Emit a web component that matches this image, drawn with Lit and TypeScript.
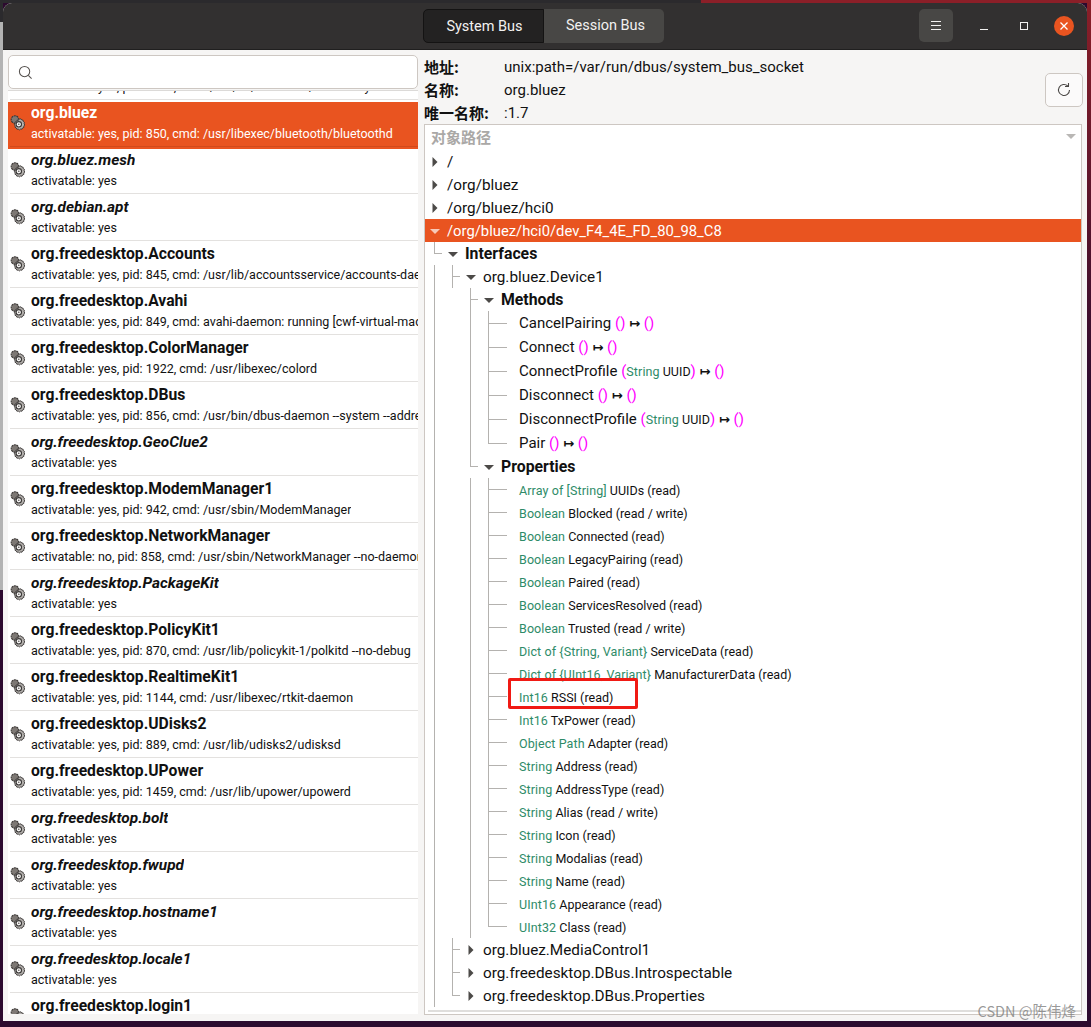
import { LitElement, html, css, svg } from 'lit';
import { customElement } from 'lit/decorators.js';

interface Service {
  name: string;
  info: string;
  idle?: boolean;
  selected?: boolean;
}

const yes = 'activatable: yes';

const services: Service[] = [
  { name: 'org.bluez.obex', info: `${yes}, pid: 1041, cmd: /usr/lib/bluetooth/obexd --system` },
  { name: 'org.bluez', info: `${yes}, pid: 850, cmd: /usr/libexec/bluetooth/bluetoothd`, selected: true },
  { name: 'org.bluez.mesh', info: yes, idle: true },
  { name: 'org.debian.apt', info: yes, idle: true },
  { name: 'org.freedesktop.Accounts', info: `${yes}, pid: 845, cmd: /usr/lib/accountsservice/accounts-daemon` },
  { name: 'org.freedesktop.Avahi', info: `${yes}, pid: 849, cmd: avahi-daemon: running [cwf-virtual-machine.local]` },
  { name: 'org.freedesktop.ColorManager', info: `${yes}, pid: 1922, cmd: /usr/libexec/colord` },
  { name: 'org.freedesktop.DBus', info: `${yes}, pid: 856, cmd: /usr/bin/dbus-daemon --system --address=systemd:` },
  { name: 'org.freedesktop.GeoClue2', info: yes, idle: true },
  { name: 'org.freedesktop.ModemManager1', info: `${yes}, pid: 942, cmd: /usr/sbin/ModemManager` },
  { name: 'org.freedesktop.NetworkManager', info: 'activatable: no, pid: 858, cmd: /usr/sbin/NetworkManager --no-daemon' },
  { name: 'org.freedesktop.PackageKit', info: yes, idle: true },
  { name: 'org.freedesktop.PolicyKit1', info: `${yes}, pid: 870, cmd: /usr/lib/policykit-1/polkitd --no-debug` },
  { name: 'org.freedesktop.RealtimeKit1', info: `${yes}, pid: 1144, cmd: /usr/libexec/rtkit-daemon` },
  { name: 'org.freedesktop.UDisks2', info: `${yes}, pid: 889, cmd: /usr/lib/udisks2/udisksd` },
  { name: 'org.freedesktop.UPower', info: `${yes}, pid: 1459, cmd: /usr/lib/upower/upowerd` },
  { name: 'org.freedesktop.bolt', info: yes, idle: true },
  { name: 'org.freedesktop.fwupd', info: yes, idle: true },
  { name: 'org.freedesktop.hostname1', info: yes, idle: true },
  { name: 'org.freedesktop.locale1', info: yes, idle: true },
  { name: 'org.freedesktop.login1', info: yes },
];

type Kind = 'plain' | 'bold' | 'method' | 'prop';

interface Node {
  label: unknown;
  kind?: Kind;
  open?: boolean;
  leaf?: boolean;
  selected?: boolean;
  marked?: boolean;
  children?: Node[];
}

const ty = (t: string) => html`<span class="type">${t}</span>`;
const par = (t: string) => html`<span class="par">${t}</span>`;
const method = (name: string, arg?: string): Node => ({
  kind: 'method',
  leaf: true,
  label: html`${name} ${par('(')}${arg ? html`<small>${ty('String')} ${arg}</small>` : ''}${par(')')} <b class="arrow">↦</b> ${par('()')}`,
});
const prop = (type: string, rest: string, marked = false): Node => ({
  kind: 'prop',
  leaf: true,
  marked,
  label: html`${ty(type)} ${rest}`,
});

const tree: Node[] = [
  { label: '/' },
  { label: '/org/bluez' },
  { label: '/org/bluez/hci0' },
  {
    label: '/org/bluez/hci0/dev_F4_4E_FD_80_98_C8',
    open: true,
    selected: true,
    children: [
      {
        label: 'Interfaces',
        kind: 'bold',
        open: true,
        children: [
          {
            label: 'org.bluez.Device1',
            open: true,
            children: [
              {
                label: 'Methods',
                kind: 'bold',
                open: true,
                children: [
                  method('CancelPairing'),
                  method('Connect'),
                  method('ConnectProfile', 'UUID'),
                  method('Disconnect'),
                  method('DisconnectProfile', 'UUID'),
                  method('Pair'),
                ],
              },
              {
                label: 'Properties',
                kind: 'bold',
                open: true,
                children: [
                  prop('Array of [String]', 'UUIDs (read)'),
                  prop('Boolean', 'Blocked (read / write)'),
                  prop('Boolean', 'Connected (read)'),
                  prop('Boolean', 'LegacyPairing (read)'),
                  prop('Boolean', 'Paired (read)'),
                  prop('Boolean', 'ServicesResolved (read)'),
                  prop('Boolean', 'Trusted (read / write)'),
                  prop('Dict of {String, Variant}', 'ServiceData (read)'),
                  prop('Dict of {UInt16, Variant}', 'ManufacturerData (read)'),
                  prop('Int16', 'RSSI (read)', true),
                  prop('Int16', 'TxPower (read)'),
                  prop('Object Path', 'Adapter (read)'),
                  prop('String', 'Address (read)'),
                  prop('String', 'AddressType (read)'),
                  prop('String', 'Alias (read / write)'),
                  prop('String', 'Icon (read)'),
                  prop('String', 'Modalias (read)'),
                  prop('String', 'Name (read)'),
                  prop('UInt16', 'Appearance (read)'),
                  prop('UInt32', 'Class (read)'),
                ],
              },
            ],
          },
          { label: 'org.bluez.MediaControl1' },
          { label: 'org.freedesktop.DBus.Introspectable' },
          { label: 'org.freedesktop.DBus.Properties' },
        ],
      },
    ],
  },
];

// two meshed gears, the small one behind at the top left
const gear = svg`
  <circle cx="5" cy="4.600" r="3.800" fill="#7d7874" stroke="#3a3735" stroke-width="1.100" stroke-dasharray="2 .7"/>
  <path d="M8.300 3.600l1.300.6 1.300-.4.800 1.200 1.400.2.200 1.400 1.200.8-.4 1.400.7 1.200-1 1 .1 1.400-1.300.5-.6 1.300-1.400-.2-1.100.9-1.200-.8-1.400.1-.6-1.300-1.300-.6.200-1.400-.9-1.100.8-1.200-.1-1.400 1.300-.6.6-1.300 1.400.1z" fill="#b3b0ad" stroke="#3a3735" stroke-width=".9"/>
  <circle cx="8.800" cy="9.300" r="2.700" fill="#f6f5f4" stroke="#3a3837" stroke-width="1.100"/>
  <circle cx="8.800" cy="9.300" r=".8" fill="#55514f"/>`;

@customElement('app-root')
export class AppRoot extends LitElement {
  static styles = css`
    :host {
      display: block;
      height: 1027px;
      box-sizing: border-box;
      padding: 3px 4px 6px 3px;
      overflow: hidden;
      position: relative;
      background:
        linear-gradient(90deg, #2b2a2d 0, #2b2a2d 64.2%, #8b1f28 64.3%, #8b1f28 100%) top / 100% 3px no-repeat,
        linear-gradient(#2b2a2d 0, #2b2a2d 22px, #b3b3b3 22px, #b3b3b3 590px, #2c0a2e 590px) left / 3px 100% no-repeat,
        linear-gradient(#8b1f28 0, #2c0a2e 400px) right / 4px 100% no-repeat,
        #2c0a2e;
      font-family: Roboto, 'Noto Sans', sans-serif;
      color: #111;
    }

    .window {
      height: 100%;
      display: flex;
      flex-direction: column;
      border-radius: 9px 9px 0 0;
      overflow: hidden;
      background: #f6f5f4;
    }

    /* header bar */
    header {
      flex: none;
      height: 47px;
      box-sizing: border-box;
      padding: 6px 3px 7px 420px;
      display: flex;
      align-items: center;
      background: #323030;
      border-bottom: 1px solid #201f1f;
    }

    .switcher {
      display: flex;
      height: 34px;
    }

    .switcher button {
      all: unset;
      width: 120px;
      height: 34px;
      box-sizing: border-box;
      padding-left: 3px;
      text-align: center;
      font-size: 14.5px;
      line-height: 34px;
      color: #f2f1f0;
      background: #484745;
      border-radius: 0 5px 5px 0;
    }

    .switcher button.on {
      width: 121px;
      padding-left: 2px;
      line-height: 33px;
      background: #232222;
      border: 1px solid #141313;
      border-radius: 5px 0 0 5px;
    }

    .menu {
      margin-left: auto;
      width: 34px;
      height: 33px;
      border-radius: 5px;
      background: #484745;
      display: flex;
      align-items: center;
      justify-content: center;
    }

    .wm {
      width: 40px;
      height: 33px;
      display: flex;
      align-items: center;
      justify-content: center;
    }

    .wm.first {
      margin-left: 11px;
    }

    .close {
      width: 20px;
      height: 20px;
      border-radius: 50%;
      background: #e95420;
      display: flex;
      align-items: center;
      justify-content: center;
    }

    /* body */
    .body {
      flex: 1;
      min-height: 0;
      display: flex;
    }

    .left {
      flex: none;
      width: 415px;
      box-sizing: border-box;
      padding: 5px 0 7px 5px;
      display: flex;
      flex-direction: column;
    }

    .search {
      flex: none;
      height: 34px;
      box-sizing: border-box;
      border: 1px solid #cdc7c2;
      border-radius: 5px;
      background: #fff;
      display: flex;
      align-items: center;
      padding-left: 9px;
    }

    .list {
      flex: 1;
      min-height: 0;
      margin-top: 1px;
      overflow: hidden;
      background: #fff;
      border-top: 1px solid #dcdad8;
    }

    .list-inner {
      margin-top: -36px;
    }

    .svc {
      height: 47px;
      box-sizing: border-box;
      padding: 0 0 0 2px;
    }

    .svc-in {
      height: 45px;
      box-sizing: border-box;
      border-bottom: 1px solid #e3e1df;
      display: flex;
      align-items: center;
      gap: 5px;
    }

    .svc svg {
      flex: none;
      width: 16px;
      height: 16px;
      margin-bottom: 3px;
    }

    .svc-txt {
      min-width: 0;
      white-space: nowrap;
      overflow: hidden;
    }

    .svc-name {
      font-size: 15.7px;
      font-weight: 700;
      line-height: 18px;
      height: 20px;
    }

    .svc-name.idle {
      font-style: italic;
      font-size: 15.4px;
    }

    .svc-info {
      font-size: 12.5px;
      line-height: 20px;
      height: 20px;
    }

    .svc.sel {
      background: #e95420;
      color: #fff;
      padding-left: 2px;
    }

    .svc.sel .svc-in {
      border-bottom-color: #d14a1c;
    }

    .right {
      flex: 1;
      min-width: 0;
      box-sizing: border-box;
      padding: 5px 4px 6px 6px;
      display: flex;
      flex-direction: column;
    }

    .info {
      flex: none;
      height: 69px;
      display: flex;
      align-items: center;
    }

    .fields {
      flex: 1;
      display: grid;
      grid-template-columns: 80px 1fr;
      grid-auto-rows: 23px;
      align-items: center;
      font-size: 15px;
      line-height: 20px;
      align-self: flex-start;
    }

    .fields b {
      font-family: 'Noto Sans CJK SC', sans-serif;
      font-size: 15px;
    }

    .refresh {
      width: 38px;
      height: 34px;
      box-sizing: border-box;
      border: 1px solid #cdc7c2;
      border-radius: 5px;
      background: #fbfafa;
      display: flex;
      align-items: center;
      justify-content: center;
    }

    .tree {
      flex: 1;
      min-height: 0;
      margin-right: 1px;
      box-sizing: border-box;
      border: 1px solid #cdc7c2;
      background: #fff;
      overflow: hidden;
      display: flex;
      flex-direction: column;
    }

    .tree-head {
      flex: none;
      height: 25px;
      padding: 0 4px 2px 6px;
      box-sizing: border-box;
      display: flex;
      align-items: center;
      justify-content: space-between;
      font: 700 15px 'Noto Sans CJK SC', sans-serif;
      color: #aaa8a6;
    }

    .rows {
      flex: 1;
      min-height: 0;
    }

    .row {
      height: 23px;
      padding-left: 4px;
      display: flex;
      align-items: center;
      font-size: 15.3px;
      white-space: nowrap;
      position: relative;
    }

    .row.prop > .label {
      padding-top: 2px;
    }

    .row.method {
      height: 24px;
      font-size: 15px;
    }

    .row.prop {
      font-size: 12.5px;
    }

    .row.bold {
      font-weight: 700;
      font-size: 15.8px;
    }

    .row.sel {
      background: #e95420;
      color: #fff;
      font-size: 14.8px;
    }

    .cell {
      flex: none;
      width: 18px;
      align-self: stretch;
      display: flex;
      align-items: center;
      background-repeat: no-repeat;
      --ln: #b4b2af;
    }

    .cell.v {
      background-image: linear-gradient(var(--ln), var(--ln));
      background-size: 1px 100%;
      background-position: 5px 0;
    }

    .cell.t,
    .cell.l {
      background-image: linear-gradient(var(--ln), var(--ln)), linear-gradient(var(--ln), var(--ln));
      background-size: 1px 100%, 8px 1px;
      background-position: 5px 0, 5px 50%;
    }

    .cell.l {
      background-size: 1px 50%, 8px 1px;
    }

    .cell.long {
      background-size: 1px 100%, 13px 1px;
    }

    .cell.long.l {
      background-size: 1px 50%, 13px 1px;
    }

    .cell.stub {
      background-image: linear-gradient(var(--ln), var(--ln));
      background-size: 6px 1px;
      background-position: 0 50%;
    }

    .type {
      color: #2e8b68;
      letter-spacing: 0.1px;
    }

    .par {
      color: #ff00ff;
    }

    .arrow {
      font-family: 'DejaVu Sans', sans-serif;
      font-size: 13px;
    }

    small {
      font-size: 12.5px;
    }

    .mark {
      position: absolute;
      left: 83px;
      top: -7px;
      width: 130px;
      height: 31px;
      box-sizing: border-box;
      border: 3px solid #f01a14;
      border-radius: 2px;
    }

    .scroll {
      flex: none;
      height: 2px;
      margin: 0 0 2px 3px;
      background: #dfdedc;
    }

    .watermark {
      position: absolute;
      right: 15px;
      bottom: 6px;
      font: 14.5px 'Noto Sans CJK SC', sans-serif;
      color: rgba(120, 120, 120, 0.75);
    }
  `;

  renderService(s: Service) {
    return html`
      <div class="svc ${s.selected ? 'sel' : ''}">
        <div class="svc-in">
          <svg viewBox="0 0 16 16">${gear}</svg>
          <div class="svc-txt">
            <div class="svc-name ${s.idle ? 'idle' : ''}">${s.name}</div>
            <div class="svc-info">${s.info}</div>
          </div>
        </div>
      </div>
    `;
  }

  renderArrow(open: boolean, selected: boolean) {
    const fill = selected ? '#f7c9b8' : '#4c4a48';
    return html`<svg width="12" height="12" viewBox="0 0 12 12">
      <polygon points=${open ? '1,4 11,4 6,9' : '3.500,1 8.500,6 3.500,11'} fill=${fill}></polygon>
    </svg>`;
  }

  // guides: one flag per ancestor level, true while that level still has siblings below
  renderNode(n: Node, guides: boolean[], last: boolean): unknown {
    const depth = guides.length;
    const cells = [];
    for (let i = 0; i < depth - 1; i++) {
      cells.push(html`<span class="cell ${guides[i] ? 'v' : ''}"></span>`);
    }
    if (depth > 0) {
      cells.push(html`<span class="cell ${last ? 'l' : 't'} ${n.leaf ? 'long' : ''}"></span>`);
    }
    const next = [...guides, !last];
    return html`
      <div class="row ${n.kind ?? ''} ${n.selected ? 'sel' : ''}">
        ${cells}
        ${n.leaf
          ? html`<span class="cell stub"></span>`
          : html`<span class="cell">${this.renderArrow(!!n.open, !!n.selected)}</span>`}
        <span class="label">${n.label}</span>
        ${n.marked ? html`<span class="mark"></span>` : ''}
      </div>
      ${n.open && n.children
        ? n.children.map((c, i) => this.renderNode(c, next, i === n.children!.length - 1))
        : ''}
    `;
  }

  render() {
    return html`
      <div class="window">
        <header>
          <div class="switcher">
            <button class="on">System Bus</button>
            <button>Session Bus</button>
          </div>
          <div class="menu">
            <svg width="12" height="12" viewBox="0 0 12 12" fill="none" stroke="#f2f1f0">
              <path d="M1 1.500h10M1 5.500h10M1 9.500h10"></path>
            </svg>
          </div>
          <div class="wm first">
            <svg width="10" height="10" viewBox="0 0 10 10" fill="none" stroke="#f2f1f0">
              <path d="M1 8.500h8"></path>
            </svg>
          </div>
          <div class="wm">
            <svg width="10" height="10" viewBox="0 0 10 10" fill="none" stroke="#f2f1f0">
              <rect x="1.500" y="1.500" width="7" height="7"></rect>
            </svg>
          </div>
          <div class="wm">
            <div class="close">
              <svg width="10" height="10" viewBox="0 0 10 10" fill="none" stroke="#fff" stroke-width="1.300">
                <path d="M1.500 1.500l7 7M8.500 1.500l-7 7"></path>
              </svg>
            </div>
          </div>
        </header>
        <div class="body">
          <div class="left">
            <div class="search">
              <svg width="15" height="15" viewBox="0 0 16 16" fill="none" stroke="#56524f" stroke-width="1.100">
                <circle cx="7" cy="7" r="5.500"></circle>
                <path d="M11 11l3.500 3.500"></path>
              </svg>
            </div>
            <div class="list">
              <div class="list-inner">${services.map(s => this.renderService(s))}</div>
            </div>
          </div>
          <div class="right">
            <div class="info">
              <div class="fields">
                <b>地址:</b><span>unix:path=/var/run/dbus/system_bus_socket</span>
                <b>名称:</b><span>org.bluez</span>
                <b>唯一名称:</b><span>:1.7</span>
              </div>
              <div class="refresh">
                <svg width="16" height="16" viewBox="0 0 16 16" fill="none" stroke="#4a4745" stroke-width="1.100">
                  <path d="M13.500 8a5.500 5.500 0 1 1-1.700-4"></path>
                  <path d="M12.500 1v3.500H9" stroke-linejoin="round"></path>
                </svg>
              </div>
            </div>
            <div class="tree">
              <div class="tree-head">
                <span>对象路径</span>
                <svg width="12" height="8" viewBox="0 0 12 8"><polygon points="1,1 11,1 6,6" fill="#b9b7b5"></polygon></svg>
              </div>
              <div class="rows">${tree.map(n => this.renderNode(n, [], false))}</div>
              <div class="scroll"></div>
            </div>
          </div>
        </div>
      </div>
      <div class="watermark">CSDN @陈伟烽</div>
    `;
  }
}
